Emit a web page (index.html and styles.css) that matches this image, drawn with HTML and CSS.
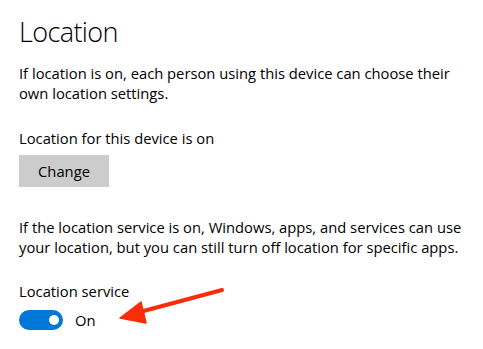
FILE: index.html
```html
<!DOCTYPE html>
<html>
<head>
<meta charset="utf-8">
<link rel="stylesheet" href="styles.css">
</head>
<body>
<div class="page">
  <h1 class="title">Location</h1>
  <p class="text para1">If location is on, each person using this device can choose their own location settings.</p>
  <p class="text status">Location for this device is on</p>
  <button class="btn">Change</button>
  <p class="text para2">If the location service is on, Windows, apps, and services can use your location, but you can still turn off location for specific apps.</p>
  <p class="text label">Location service</p>
  <div class="toggle-row">
    <span class="toggle"><span class="knob"></span></span>
    <span class="toggle-text">On</span>
  </div>
  <svg class="arrow" width="120" height="50" viewBox="110 280 120 50">
    <line x1="222" y1="290" x2="136" y2="313" stroke="#fb2c08" stroke-width="4" stroke-linecap="round"/>
    <polygon points="120,318 141,302 146,323" fill="#fb2c08" stroke="#fb2c08" stroke-width="1.5" stroke-linejoin="round"/>
  </svg>
</div>
</body>
</html>
```
FILE: styles.css
```css
html, body {
  margin: 0;
  padding: 0;
  background: #fff;
}
.page {
  position: relative;
  width: 483px;
  height: 349px;
  padding: 0 0 0 19px;
  box-sizing: border-box;
  font-family: "Open Sans", "Noto Sans", sans-serif;
  color: #000;
  overflow: hidden;
}
.title {
  margin: 0;
  padding-top: 14px;
  font-size: 27px;
  font-weight: 300;
  line-height: 36px;
  letter-spacing: -0.6px;
}
.text {
  margin: 0;
  font-size: 14.75px;
  line-height: 20px;
  width: 452px;
}
.para1 { margin-top: 13px; }
.status { margin-top: 25px; }
.btn {
  display: block;
  margin-top: 7px;
  width: 90px;
  height: 32px;
  border: none;
  background: #cccccc;
  font-family: inherit;
  font-size: 14.75px;
  color: #000;
  padding: 0;
}
.para2 { margin-top: 30px; }
.label { margin-top: 24px; }
.toggle-row {
  display: flex;
  align-items: center;
  gap: 12px;
  margin-top: 9px;
}
.toggle {
  position: relative;
  display: block;
  width: 44px;
  height: 20px;
  border-radius: 10px;
  background: #0078d7;
}
.knob {
  position: absolute;
  right: 4px;
  top: 5px;
  width: 10px;
  height: 10px;
  border-radius: 50%;
  background: #fff;
}
.toggle-text {
  font-size: 14.75px;
  line-height: 20px;
}
.arrow {
  position: absolute;
  left: 110px;
  top: 280px;
}
```
